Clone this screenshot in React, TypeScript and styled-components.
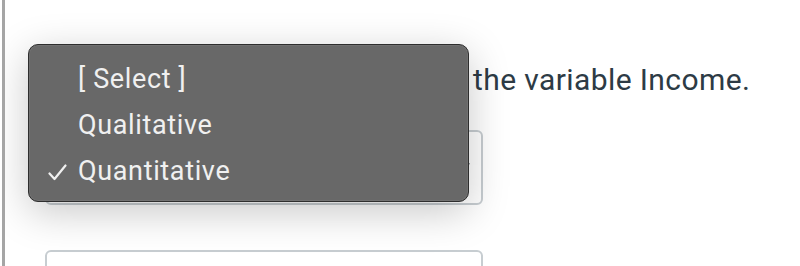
import styled, { createGlobalStyle } from "styled-components";

const Global = createGlobalStyle`
    html, body {
        margin: 0;
        padding: 0;
        background: #fff;
    }
    body {
        width: 800px;
        height: 266px;
        overflow: hidden;
    }
`

const Page = styled.div`
    position: relative;
    width: 800px;
    height: 266px;
    box-sizing: border-box;
    border-left: 3px solid #a5a5a5;
    margin-left: 2px;
    overflow: hidden;
`

const Question = styled.div`
    display: flex;
    flex-direction: column;
    padding: 60px 0 0 40px;
`

const Prompt = styled.p`
    margin: 0 0 0 428px;
    font-family: Roboto, "Liberation Sans", sans-serif;
    font-size: 30px;
    letter-spacing: 0.4px;
    line-height: 40px;
    color: #2d3b45;
`

const SelectBox = styled.div`
    position: relative;
    width: 438px;
    height: 75px;
    box-sizing: border-box;
    margin-top: 30px;
    border: 2px solid #c7cdd1;
    border-radius: 6px;
    background: #fff;
`

const Chevron = styled.svg`
    position: absolute;
    right: 6px;
    top: 27px;
`

const EmptyBox = styled.div`
    width: 438px;
    height: 40px;
    box-sizing: border-box;
    margin-top: 45px;
    border: 2px solid #c7cdd1;
    border-radius: 6px;
    background: #fff;
`

const Menu = styled.ul`
    position: absolute;
    left: 23px;
    top: 44px;
    width: 441px;
    height: 158px;
    box-sizing: border-box;
    margin: 0;
    padding: 11px 0 0;
    list-style: none;
    background: #686868;
    border: 1px solid #2e2e2e;
    border-radius: 10px;
    box-shadow: 0 0 0 1px rgba(120,120,120,0.6) inset, 0 10px 40px rgba(0,0,0,0.22);
`

const Item = styled.li`
    display: flex;
    align-items: center;
    height: 46px;
    padding-left: 19px;
    font-family: Roboto, "Noto Sans", sans-serif;
    font-size: 27px;
    color: #f0f0f0;
    letter-spacing: 0.65px;
`

const Check = styled.svg`
    width: 19px;
    height: 17px;
    margin: 2px 11px 0 0;
`

const Blank = styled.span`
    width: 30px;
`

const options = ["[ Select ]", "Qualitative", "Quantitative"]
const selected = "Quantitative"

export default function App() {
    return (
        <Page>
            <Global />
            <Question>
                <Prompt>the variable Income.</Prompt>
                <SelectBox>
                    <Chevron width="14" height="14" viewBox="0 0 14 14">
                        <path d="M2 11 L8 4" stroke="#2d3b45" strokeWidth="2" fill="none" />
                    </Chevron>
                </SelectBox>
                <EmptyBox />
            </Question>
            <Menu>
                {options.map(o => (
                    <Item key={o}>
                        {o === selected ? (
                            <Check viewBox="0 0 19 17">
                                <path d="M1.5 9.5 L6.5 15 L17.5 1.5" stroke="#f0f0f0" strokeWidth="2.2" fill="none" strokeLinecap="round" strokeLinejoin="round" />
                            </Check>
                        ) : <Blank />}
                        {o}
                    </Item>
                ))}
            </Menu>
        </Page>
    )
}
